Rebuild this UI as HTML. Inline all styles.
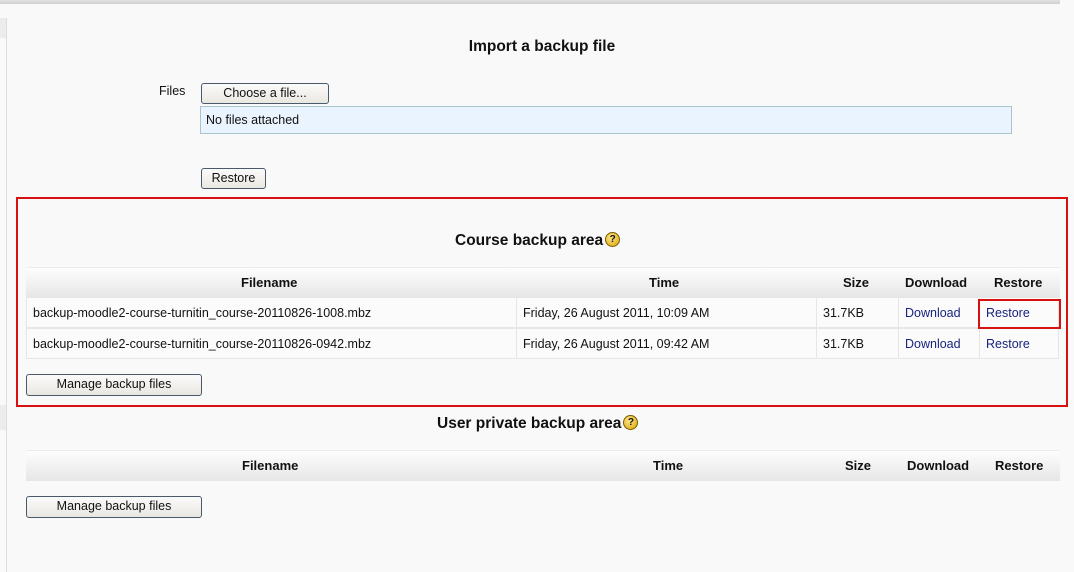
<!DOCTYPE html>
<html><head><style>
body{margin:0;width:1074px;height:572px;background:#f9f9f9;font-family:"Liberation Sans",sans-serif;font-size:12.5px;color:#111;position:relative;overflow:hidden}
.a{position:absolute}
.btn{position:absolute;border:1px solid #4a5a6a;border-radius:3px;background:linear-gradient(#fbfbfb,#e9e7e1);box-sizing:border-box;text-align:center;font-size:12.5px;line-height:19px;color:#111}
.hdr{position:absolute;left:26px;width:1034px;height:31px;background:linear-gradient(#fdfdfd,#e6e6e6);border-top:1px solid #ececec;box-sizing:border-box;font-weight:bold;font-size:13px}
.hdr span,.row span{position:absolute;top:0;line-height:30px}
.row{position:absolute;left:26px;width:1033px;height:31px;background:#fbfbfb;border:1px solid #e6e6e6;box-sizing:border-box}
.row i{position:absolute;top:0;bottom:0;width:1px;background:#e6e6e6}
a{color:#1a237e;text-decoration:none}
.q{display:inline-block;position:relative;top:-1px;width:15px;height:15px;border-radius:50%;background:radial-gradient(circle at 40% 35%,#ffe68a,#d9a400);border:1px solid #7a5a00;box-sizing:border-box;font-size:10px;line-height:13px;text-align:center;font-weight:bold;vertical-align:middle;margin-left:2px}
h3{position:absolute;margin:0;font-size:15.5px;font-weight:bold;text-align:center;line-height:18px}
</style></head><body>
<div class="a" style="left:0;top:0;width:1060px;height:4px;background:linear-gradient(#e2e2e2,#d0d0d0)"></div>
<div class="a" style="left:0;top:18px;width:6px;height:20px;background:#ececec;border-right:1px solid #ddd"></div>
<div class="a" style="left:6px;top:18px;width:1px;height:554px;background:#ddd"></div>
<div class="a" style="left:0;top:405px;width:6px;height:25px;background:#ececec"></div>
<h3 style="left:0;width:1084px;top:38px">Import a backup file</h3>
<div class="a" style="left:159px;top:84px">Files</div>
<div class="btn" style="left:201px;top:83px;width:128px;height:21px">Choose a file...</div>
<div class="a" style="left:200px;top:106px;width:812px;height:28px;background:#eaf4fe;border:1px solid #a9c6cf;box-sizing:border-box;padding-left:5px;line-height:26px">No files attached</div>
<div class="btn" style="left:201px;top:168px;width:65px;height:21px">Restore</div>
<div class="a" style="left:16px;top:197px;width:1052px;height:210px;border:2px solid #d71010;box-sizing:border-box"></div>
<h3 style="left:455px;top:232px">Course backup area<span class="q">?</span></h3>
<div class="hdr" style="top:267px"><span style="left:215px">Filename</span><span style="left:623px">Time</span><span style="left:817px">Size</span><span style="left:879px">Download</span><span style="left:968px">Restore</span></div>
<div class="row" style="top:297px"><i style="left:489px"></i><i style="left:789px"></i><i style="left:871px"></i><i style="left:952px"></i><span style="left:6px">backup-moodle2-course-turnitin_course-20110826-1008.mbz</span><span style="left:496px">Friday, 26 August 2011, 10:09 AM</span><span style="left:796px">31.7KB</span><span style="left:878px"><a>Download</a></span><span style="left:959px"><a>Restore</a></span></div>
<div class="row" style="top:328px"><i style="left:489px"></i><i style="left:789px"></i><i style="left:871px"></i><i style="left:952px"></i><span style="left:6px">backup-moodle2-course-turnitin_course-20110826-0942.mbz</span><span style="left:496px">Friday, 26 August 2011, 09:42 AM</span><span style="left:796px">31.7KB</span><span style="left:878px"><a>Download</a></span><span style="left:959px"><a>Restore</a></span></div>
<div class="a" style="left:978px;top:299px;width:83px;height:30px;border:2px solid #d71010;box-sizing:border-box"></div>
<div class="btn" style="left:26px;top:374px;width:176px;height:22px">Manage backup files</div>
<h3 style="left:437px;top:415px">User private backup area<span class="q">?</span></h3>
<div class="hdr" style="top:450px"><span style="left:216px">Filename</span><span style="left:627px">Time</span><span style="left:819px">Size</span><span style="left:881px">Download</span><span style="left:969px">Restore</span></div>
<div class="btn" style="left:26px;top:496px;width:176px;height:22px">Manage backup files</div>
</body></html>
